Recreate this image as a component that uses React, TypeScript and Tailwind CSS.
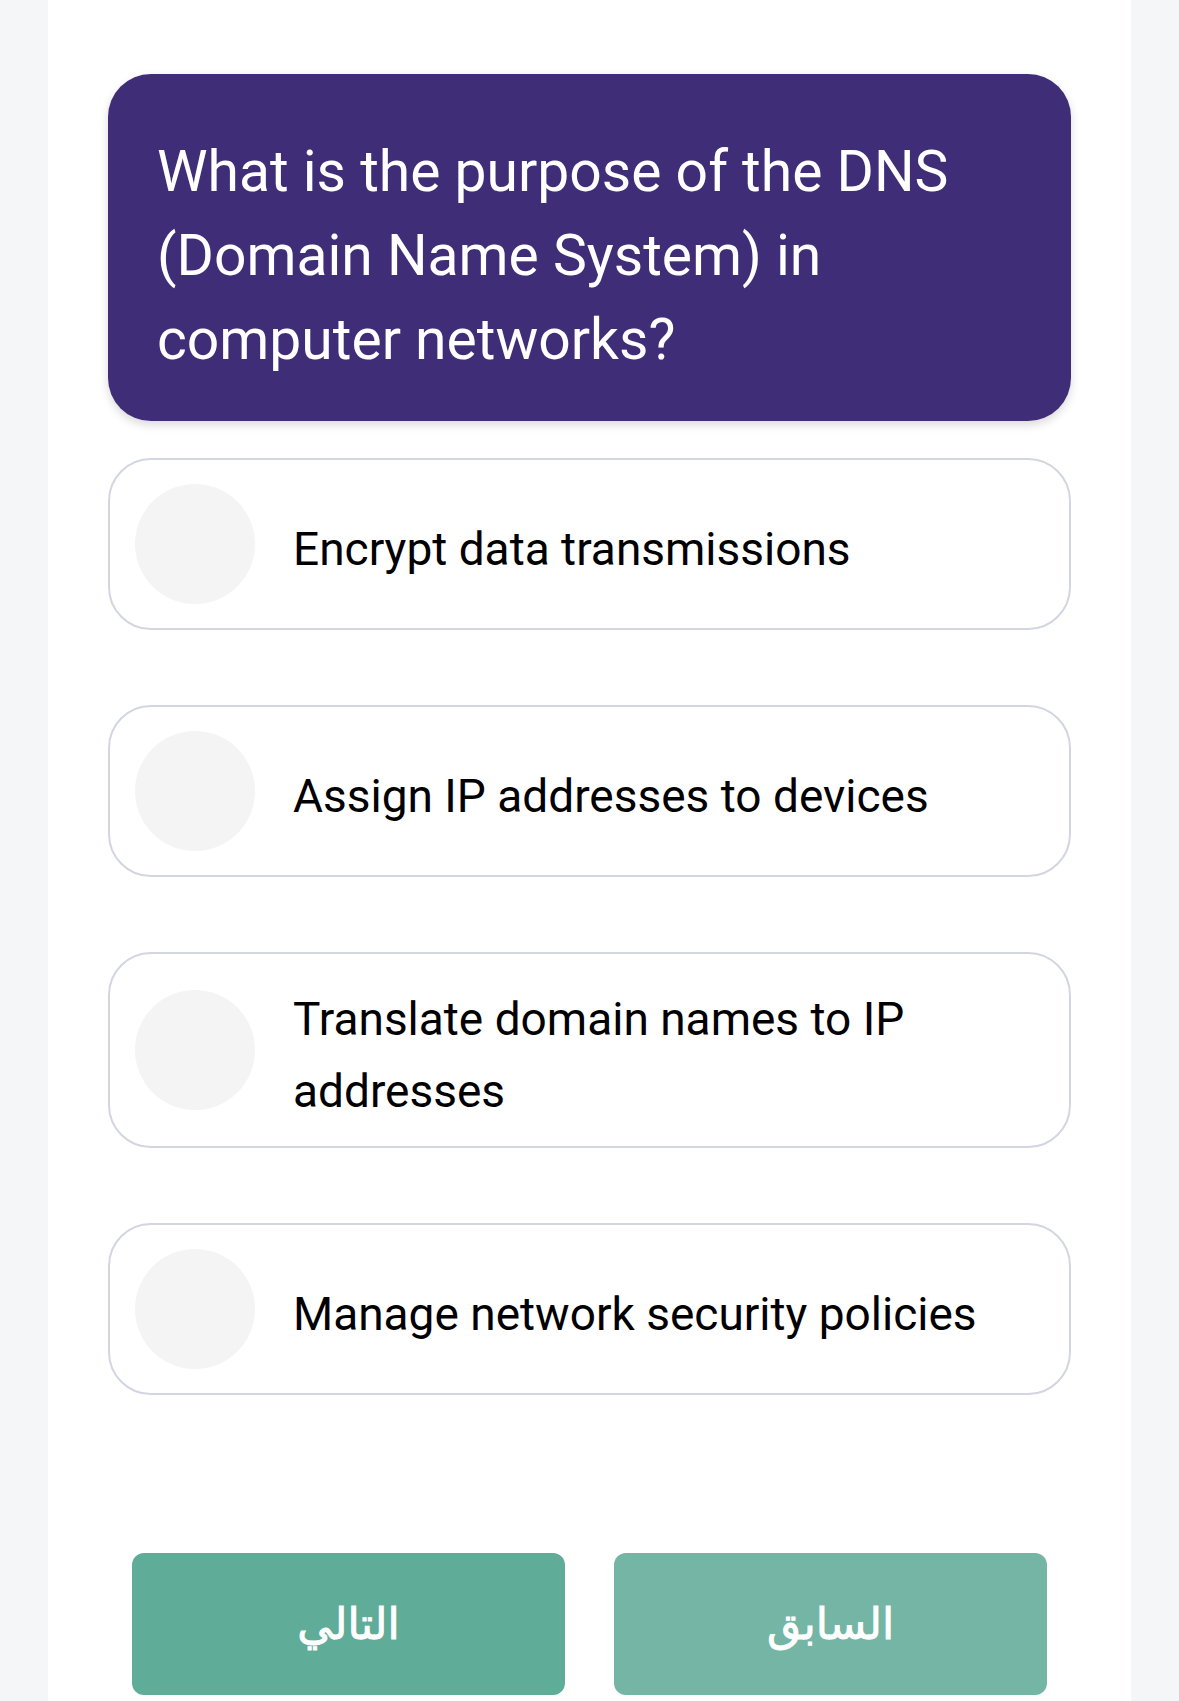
const question = 'What is the purpose of the DNS (Domain Name System) in computer networks?';

const options = [
  'Encrypt data transmissions',
  'Assign IP addresses to devices',
  'Translate domain names to IP addresses',
  'Manage network security policies',
];

function Option({ label }: { label: string }) {
  return (
    <button
      type="button"
      className="flex min-h-[171px] w-full items-center gap-[38px] rounded-[43px] border-2 border-[#d3d6e0] bg-white py-[24px] pl-[25px] pr-[40px] text-left"
    >
      <span className="h-[120px] w-[120px] shrink-0 rounded-full bg-[#f4f4f4]" />
      <span className="translate-y-[5px] text-[46px] leading-[72px] text-black">{label}</span>
    </button>
  );
}

function NavButton({ label, className }: { label: string; className: string }) {
  return (
    <button
      type="button"
      className={`flex h-[142px] flex-1 items-center justify-center rounded-[12px] font-['DejaVu_Sans',sans-serif] text-[44px] text-white [-webkit-text-stroke:0.9px_white] ${className}`}
    >
      {label}
    </button>
  );
}

export default function App() {
  return (
    <div className="flex min-h-[1701px] justify-center bg-[#f5f6f8] font-['Roboto','DejaVu_Sans',sans-serif]">
      <main className="flex w-[1083px] flex-col bg-white">
        <div className="flex flex-col gap-[37px] px-[60px] pt-[74px]">
          <div className="rounded-[43px] bg-[#3f2d78] pb-[39px] pl-[49px] pr-[40px] pt-[56px] shadow-[0_4px_10px_rgba(0,0,0,0.15)]">
            <h1 className="text-[57px] font-normal leading-[84px] text-white">{question}</h1>
          </div>
          <div className="flex flex-col gap-[75px]">
            {options.map((o) => (
              <Option key={o} label={o} />
            ))}
          </div>
        </div>
        {/* الأزرار: التالي يسارًا والسابق يمينًا */}
        <div className="flex gap-[49px] px-[84px] pb-[9px] pt-[158px]">
          <NavButton label="التالي" className="bg-[#5fac98]" />
          <NavButton label="السابق" className="bg-[#75b5a6]" />
        </div>
      </main>
    </div>
  );
}
